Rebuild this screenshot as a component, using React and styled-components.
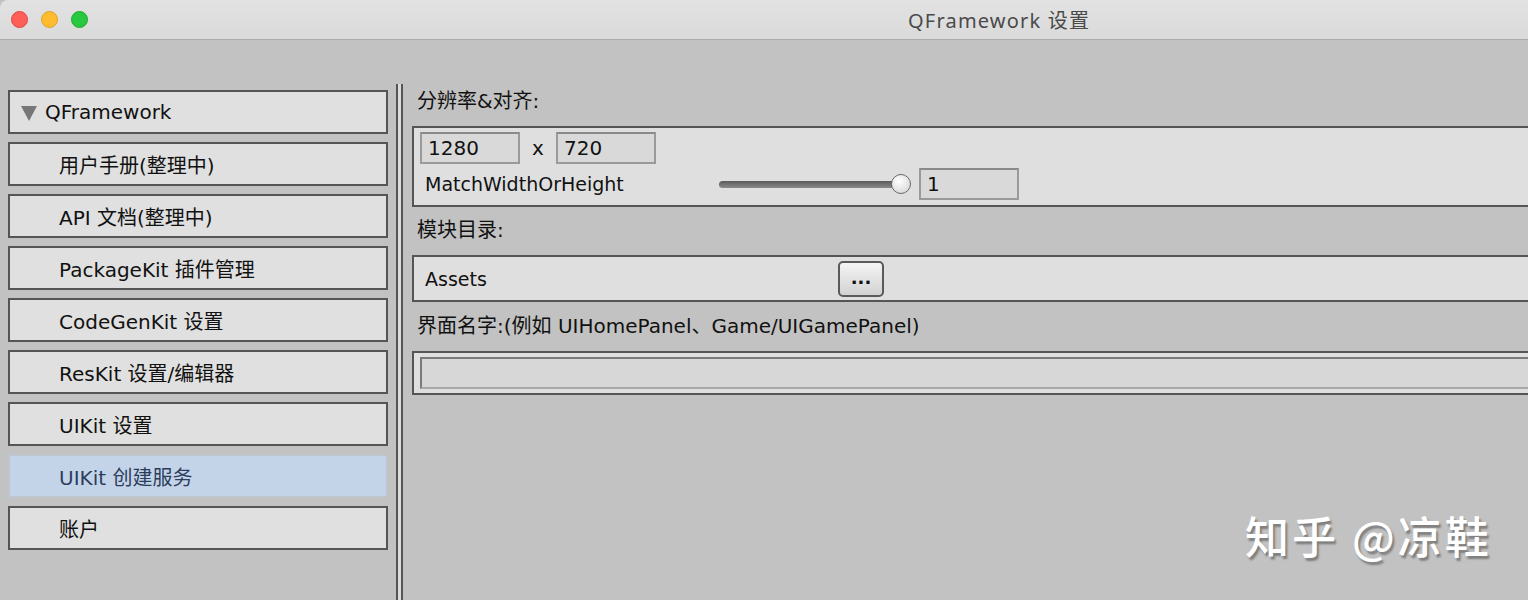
import React from 'react'
import styled, { createGlobalStyle } from 'styled-components'

const GlobalStyle = createGlobalStyle`
  html, body {
    margin: 0;
    padding: 0;
    background: #c2c2c2;
    font-family: "DejaVu Sans", "Noto Sans CJK SC", sans-serif;
    overflow: hidden;
  }
`

const navItems = [
  '用户手册(整理中)',
  'API 文档(整理中)',
  'PackageKit 插件管理',
  'CodeGenKit 设置',
  'ResKit 设置/编辑器',
  'UIKit 设置',
  'UIKit 创建服务',
  '账户',
]

const App = () => {
  return (
    <Window>
      <GlobalStyle />
      <TitleBar>
        <Lights>
          <Light color="#fe5f57" edge="#e0443e" />
          <Light color="#febc2e" edge="#dea123" />
          <Light color="#28c840" edge="#1aab29" />
        </Lights>
        <Title>QFramework 设置</Title>
      </TitleBar>

      <Body>
        <Sidebar>
          <NavItem>
            <Arrow />
            QFramework
          </NavItem>
          {navItems.map((t) => (
            <NavItem key={t} indent selected={t === 'UIKit 创建服务'}>
              {t}
            </NavItem>
          ))}
        </Sidebar>

        <Splitter />

        <Content>
          <Label>分辨率&amp;对齐:</Label>
          <Group bottom={5}>
            <Row>
              <Field width={100}>1280</Field>
              <Times>x</Times>
              <Field width={100}>720</Field>
            </Row>
            <Row>
              <FieldLabel>MatchWidthOrHeight</FieldLabel>
              <Slider>
                <Track />
                <Knob />
              </Slider>
              <Field width={100}>1</Field>
            </Row>
          </Group>

          <Label>模块目录:</Label>
          <Group bottom={3}>
            <PathRow>
              <FieldLabel>Assets</FieldLabel>
              <DotsButton>...</DotsButton>
            </PathRow>
          </Group>

          <Label tall>界面名字:(例如 UIHomePanel、Game/UIGamePanel)</Label>
          <Group bottom={4}>
            <WideField />
          </Group>
        </Content>

        <Watermark>知乎 @凉鞋</Watermark>
      </Body>
    </Window>
  )
}

const Window = styled.div`
  width: 1528px;
  height: 600px;
  display: flex;
  flex-direction: column;
  background: #c2c2c2;
  overflow: hidden;
`

const TitleBar = styled.div`
  height: 40px;
  box-sizing: border-box;
  display: flex;
  align-items: center;
  background: linear-gradient(#e2e2e2, #dadada);
  border-bottom: 1px solid #ababab;
  border-top-left-radius: 8px;
  flex-shrink: 0;
`

const Lights = styled.div`
  display: flex;
  gap: 13px;
  padding-left: 11px;
`

const Light = styled.span`
  width: 15px;
  height: 15px;
  border-radius: 50%;
  background: ${(p) => p.color};
  border: 1px solid ${(p) => p.edge};
`

const Title = styled.div`
  margin-left: 820px;
  font-family: "Noto Sans", "Noto Sans CJK SC", sans-serif;
  font-size: 20px;
  color: #4a4a4a;
  letter-spacing: 1.2px;
`

const Body = styled.div`
  flex: 1;
  display: flex;
  position: relative;
`

const Sidebar = styled.div`
  width: 380px;
  padding: 50px 0 0 8px;
  display: flex;
  flex-direction: column;
  gap: 8px;
  flex-shrink: 0;
`

const NavItem = styled.div`
  height: 44px;
  box-sizing: border-box;
  display: flex;
  align-items: center;
  padding-left: ${(p) => (p.indent ? '49px' : '11px')};
  border: 2px solid ${(p) => (p.selected ? '#bfc5cc' : '#555555')};
  background: ${(p) => (p.selected ? '#c4d4e8' : '#e0e0e0')};
  color: ${(p) => (p.selected ? '#2c3d5c' : '#111111')};
  font-size: 20px;
  white-space: nowrap;
`

const Arrow = styled.span`
  width: 0;
  height: 0;
  border-left: 8px solid transparent;
  border-right: 8px solid transparent;
  border-top: 15px solid #777777;
  margin-right: 8px;
  margin-top: 2px;
`

const Splitter = styled.div`
  width: 3px;
  margin: 44px 0 0 8px;
  border-left: 2px solid #555555;
  border-right: 2px solid #555555;
  background: #dcdcdc;
  flex-shrink: 0;
`

const Content = styled.div`
  flex: 1;
  display: flex;
  flex-direction: column;
  padding: 38px 0 0 9px;
  margin-right: -20px;
`

const Label = styled.div`
  height: ${(p) => (p.tall ? '49px' : '48px')};
  box-sizing: border-box;
  display: flex;
  align-items: center;
  padding: 0 0 5px 5px;
  font-size: 20px;
  color: #111111;
  white-space: nowrap;
`

const Group = styled.div`
  border: 2px solid #555555;
  background: #dfdfdf;
  padding: 4px 6px ${(p) => p.bottom}px 6px;
  display: flex;
  flex-direction: column;
  gap: 4px;
`

const Row = styled.div`
  display: flex;
  align-items: center;
  height: 32px;
`

const PathRow = styled.div`
  display: flex;
  align-items: center;
  height: 36px;
`

const Field = styled.div`
  width: ${(p) => p.width}px;
  height: 32px;
  box-sizing: border-box;
  border: 2px solid #9a9a9a;
  border-top-color: #8a8a8a;
  background: #d9d9d9;
  padding-left: 6px;
  display: flex;
  align-items: center;
  font-size: 20px;
  color: #111111;
`

const Times = styled.div`
  width: 36px;
  text-align: center;
  font-size: 20px;
  color: #111111;
`

const FieldLabel = styled.div`
  width: 294px;
  padding-left: 5px;
  font-size: 19px;
  color: #111111;
  white-space: nowrap;
`

const Slider = styled.div`
  width: 200px;
  height: 24px;
  display: flex;
  align-items: center;
  position: relative;
`

const Track = styled.div`
  width: 186px;
  height: 7px;
  border-radius: 4px;
  background: linear-gradient(#5a5a5a, #8a8a8a);
`

const Knob = styled.div`
  position: absolute;
  left: 172px;
  top: 2px;
  width: 18px;
  height: 18px;
  border-radius: 50%;
  border: 1px solid #6a6a6a;
  background: radial-gradient(circle at 40% 35%, #ffffff, #d0d0d0);
`

const DotsButton = styled.div`
  width: 46px;
  height: 36px;
  box-sizing: border-box;
  margin-left: 119px;
  border: 2px solid #5a5a5a;
  border-radius: 5px;
  background: linear-gradient(#f4f4f4, #d2d2d2);
  display: flex;
  align-items: center;
  justify-content: center;
  font-size: 18px;
  font-weight: 700;
  color: #111111;
  padding-bottom: 4px;
`

const WideField = styled.div`
  height: 32px;
  box-sizing: border-box;
  border: 2px solid #7a7a7a;
  border-bottom-color: #a8a8a8;
  background: #d7d7d7;
`

const Watermark = styled.div`
  position: absolute;
  left: 1245px;
  top: 463px;
  font-family: "Noto Sans CJK SC", sans-serif;
  font-size: 44px;
  font-weight: 500;
  color: #ffffff;
  letter-spacing: 3px;
  text-shadow: 2px 3px 2px rgba(0, 0, 0, 0.35);
  white-space: nowrap;
`

export default App
